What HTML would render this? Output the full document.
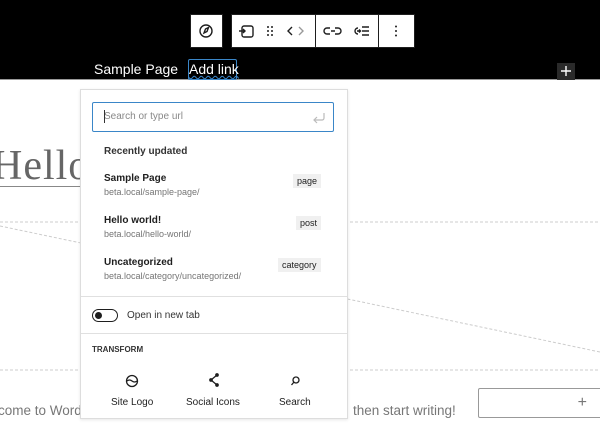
<!DOCTYPE html>
<html><head><meta charset="utf-8"><style>
*{margin:0;padding:0;box-sizing:border-box}
body{width:600px;height:438px;overflow:hidden;background:#fff;font-family:"Liberation Sans",sans-serif;position:relative;color:#1e1e1e}
.a{position:absolute}
.hdr{left:0;top:0;width:600px;height:80px;background:#000;border-bottom:1px solid #999}
.tb{background:#fff;border:1px solid #1e1e1e;height:34px;top:14px}
.t{font-size:10px;color:#1e1e1e}
.s{font-size:9px;color:#757575}
.tag{background:#f0f0f0;font-size:9px;padding:2px 4px;color:#1e1e1e}
</style></head><body>
<div class="a hdr"></div>
<div class="a tb" style="left:190px;width:33px"></div>
<div class="a tb" style="left:231px;width:184px"></div>
<div class="a" style="left:315px;top:14px;width:1px;height:34px;background:#1e1e1e"></div>
<div class="a" style="left:378px;top:14px;width:1px;height:34px;background:#1e1e1e"></div>
<svg class="a" style="left:0;top:0" width="600" height="80">
<g fill="none" stroke="#1e1e1e" stroke-width="1.4">
<circle cx="206" cy="31" r="6"/><path d="M204 33l1.5-4 3-1.5-1.5 4z"/>
<rect x="242" y="26" width="11" height="11" rx="2"/><path d="M239 31h6m-2-2l2 2-2 2"/>
<path d="M292 27l-4 4 4 4"/><path d="M299 27l4 4-4 4" stroke="#999"/>
<path d="M330 28h-3a3 3 0 000 6h3M335 28h3a3 3 0 010 6h-3M331 31h4"/>
<path d="M358 28a3 3 0 000 6M362 27h7M362 31h7M362 35h7"/><path d="M357 31h3m-1-1.5l1.5 1.5-1.5 1.5"/>
</g>
<g fill="#1e1e1e"><circle cx="268" cy="27" r="1"/><circle cx="272" cy="27" r="1"/><circle cx="268" cy="31" r="1"/><circle cx="272" cy="31" r="1"/><circle cx="268" cy="35" r="1"/><circle cx="272" cy="35" r="1"/>
<circle cx="396" cy="26.5" r="1"/><circle cx="396" cy="31" r="1"/><circle cx="396" cy="35.5" r="1"/></g>
<rect x="557" y="63" width="18" height="17" fill="#2a2a2a"/>
<path d="M566 66v10M561 71h10" stroke="#fff" stroke-width="1.4"/>
</svg>
<div class="a" style="left:94px;top:61px;color:#fff;font-size:14px">Sample Page</div>
<div class="a" style="left:188px;top:59px;width:49px;height:21px;border:1px solid #3a86c8;border-radius:2px"></div>
<div class="a" style="left:189px;top:61px;color:#fff;font-size:14px;text-decoration:underline wavy #3a86c8;text-decoration-thickness:1px">Add link</div>

<div class="a" style="left:-8px;top:146px;font-family:'Liberation Serif',serif;font-size:42px;color:#666;border-bottom:1px solid #888;line-height:40px;letter-spacing:1px">Hello w</div>
<svg class="a" style="left:0;top:0" width="600" height="438">
<g stroke="#ccc" stroke-dasharray="3 2" fill="none">
<path d="M0 222H600M0 370H600M0 226L600 352"/>
</g></svg>
<div class="a" style="left:-2px;top:403px;font-size:13.5px;color:#777">come to WordPress. This is your</div>
<div class="a" style="left:353px;top:403px;font-size:13.5px;color:#777">then start writing!</div>
<div class="a" style="left:478px;top:388px;width:130px;height:30px;border:1px solid #999;border-radius:2px;color:#777;font-size:16px;text-align:right;padding:3px 20px 0 0;line-height:22px">+</div>

<div class="a" style="left:80px;top:89px;width:268px;height:330px;background:#fff;border:1px solid #ddd;box-shadow:0 1px 3px rgba(0,0,0,.1)"></div>
<div class="a" style="left:92px;top:102px;width:242px;height:30px;border:1.5px solid #3a86c8;border-radius:2px"></div>
<div class="a" style="left:104px;top:111px;font-size:10px;color:#888">Search or type url</div>
<div class="a" style="left:104px;top:110px;width:1px;height:13px;background:#333"></div>
<svg class="a" style="left:311px;top:110px" width="16" height="16"><path d="M13 3v5a2 2 0 01-2 2H3m3-3l-3 3 3 3" fill="none" stroke="#bbb" stroke-width="1.2"/></svg>
<div class="a t" style="left:104px;top:146px;font-weight:bold;color:#333">Recently updated</div>
<div class="a t" style="left:104px;top:173px;font-weight:bold">Sample Page</div>
<div class="a s" style="left:104px;top:187px">beta.local/sample-page/</div>
<div class="a tag" style="left:293px;top:174px">page</div>
<div class="a t" style="left:104px;top:215px;font-weight:bold">Hello world!</div>
<div class="a s" style="left:104px;top:229px">beta.local/hello-world/</div>
<div class="a tag" style="left:296px;top:216px">post</div>
<div class="a t" style="left:104px;top:257px;font-weight:bold">Uncategorized</div>
<div class="a s" style="left:104px;top:271px">beta.local/category/uncategorized/</div>
<div class="a tag" style="left:278px;top:258px">category</div>
<div class="a" style="left:81px;top:296px;width:266px;height:1px;background:#e0e0e0"></div>
<div class="a" style="left:92px;top:309px;width:26px;height:13px;border:1.2px solid #1e1e1e;border-radius:7px"></div>
<div class="a" style="left:95px;top:312px;width:7px;height:7px;border-radius:50%;background:#1e1e1e"></div>
<div class="a t" style="left:127px;top:310px;color:#333">Open in new tab</div>
<div class="a" style="left:81px;top:333px;width:266px;height:1px;background:#e0e0e0"></div>
<div class="a" style="left:92px;top:345px;font-size:8px;font-weight:bold;color:#333">TRANSFORM</div>
<svg class="a" style="left:80px;top:370px" width="268" height="22"><g fill="none" stroke="#1e1e1e" stroke-width="1.3">
<circle cx="52" cy="11" r="5.5"/><path d="M47 11q2.5-2 5 0t5 0"/>
<path d="M137 5l-6 5 6 5"/><circle cx="137" cy="5" r="1.2" fill="#1e1e1e"/><circle cx="137" cy="15" r="1.2" fill="#1e1e1e"/><circle cx="131" cy="10" r="1.2" fill="#1e1e1e"/>
<circle cx="216" cy="10" r="3"/><path d="M214 12l-2.5 3"/></g></svg>
<div class="a t" style="left:111px;top:397px">Site Logo</div>
<div class="a t" style="left:186px;top:397px">Social Icons</div>
<div class="a t" style="left:279px;top:397px">Search</div>
</body></html>
